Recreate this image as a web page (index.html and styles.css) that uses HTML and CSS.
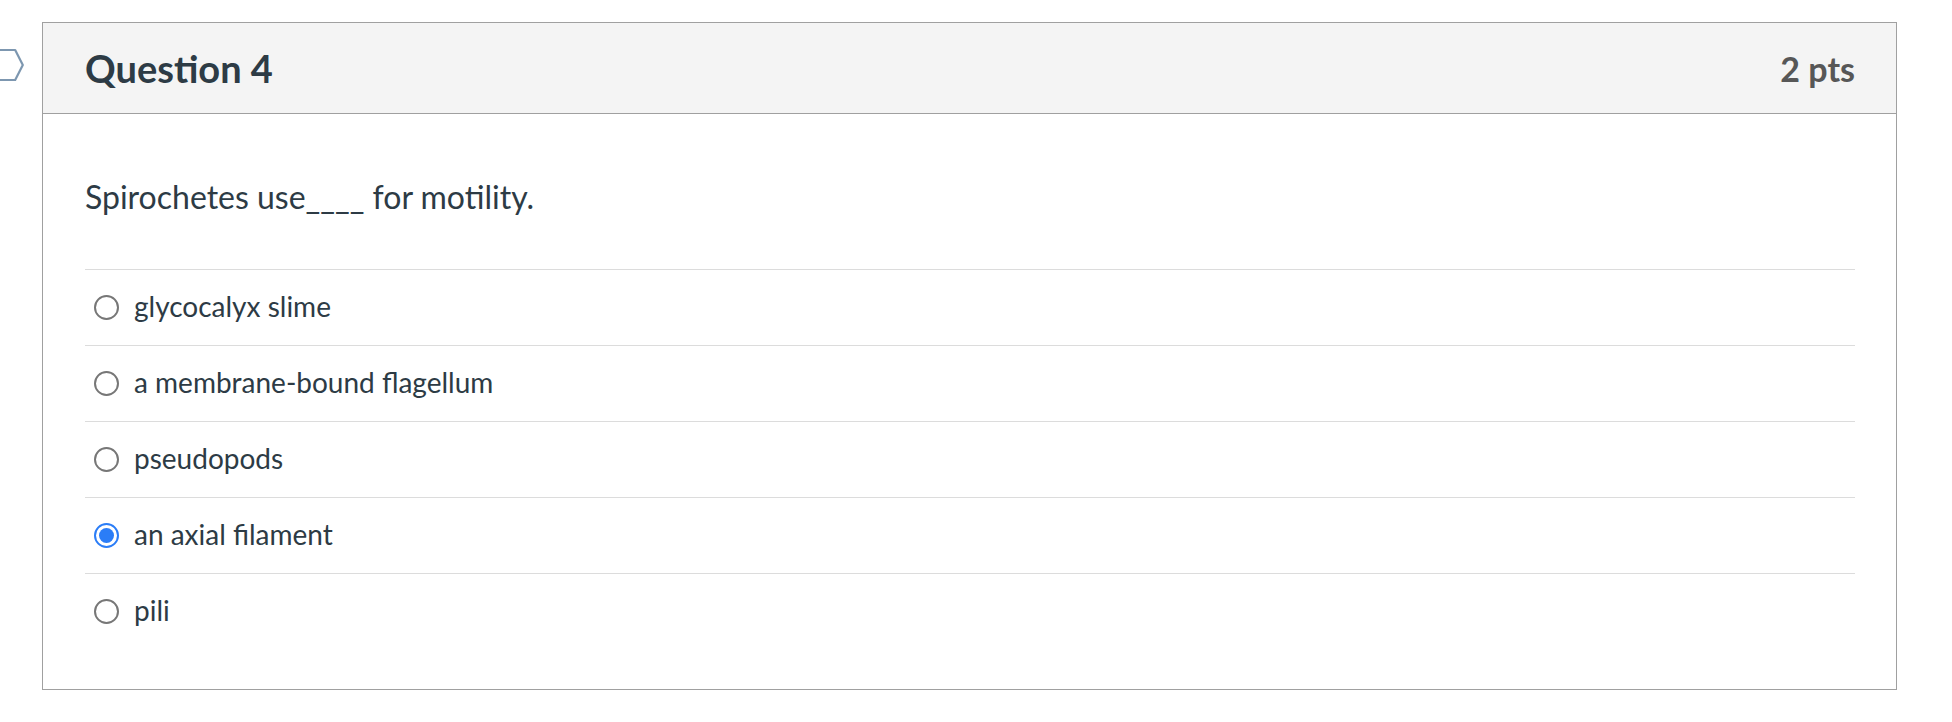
FILE: index.html
```html
<!DOCTYPE html>
<html>
<head>
<meta charset="utf-8">
<link rel="stylesheet" href="styles.css">
</head>
<body>
<div class="page">
  <div class="flag">
    <svg width="24" height="34" viewBox="0 0 24 34"><path d="M-4 2 H15.2 L22.8 17 L15.2 32 H-4" fill="none" stroke="#7d97b0" stroke-width="2.2" stroke-linejoin="round"/></svg>
  </div>
  <div class="question">
    <div class="header">
      <span class="title">Question 4</span>
      <span class="points">2 pts</span>
    </div>
    <div class="body">
      <div class="qtext">Spirochetes use____ for motility.</div>
      <div class="answers">
        <label class="answer"><span class="radio"></span><span class="label">glycocalyx slime</span></label>
        <label class="answer"><span class="radio"></span><span class="label">a membrane-bound flagellum</span></label>
        <label class="answer"><span class="radio"></span><span class="label">pseudopods</span></label>
        <label class="answer"><span class="radio checked"></span><span class="label">an axial filament</span></label>
        <label class="answer"><span class="radio"></span><span class="label">pili</span></label>
      </div>
    </div>
  </div>
</div>
</body>
</html>
```

FILE: styles.css
```css
html, body {
  margin: 0;
  padding: 0;
  background: #ffffff;
}

body {
  font-family: Lato, "Open Sans", "Liberation Sans", sans-serif;
  color: #2d3b45;
}

.page {
  display: flex;
  align-items: flex-start;
  padding: 22px 55px 0 0;
}

.flag {
  width: 42px;
  flex: 0 0 42px;
  padding-top: 26px;
}

.flag svg {
  display: block;
}

.question {
  flex: 1;
  border: 1px solid #a0a0a0;
  background: #fff;
}

.header {
  display: flex;
  align-items: center;
  justify-content: space-between;
  height: 90px;
  padding: 0 41px 0 42px;
  background: #f4f4f4;
  border-bottom: 1px solid #a0a0a0;
}

.title {
  font-size: 38px;
  font-weight: 700;
  color: #2d3b45;
}

.points {
  font-size: 34px;
  font-weight: 700;
  color: #575757;
}

.body {
  padding: 62px 41px 40px 42px;
}

.qtext {
  font-size: 32px;
  line-height: 42px;
  margin-bottom: 51px;
}

.answers {
  display: flex;
  flex-direction: column;
}

.answer {
  display: flex;
  align-items: center;
  height: 75px;
  box-sizing: border-box;
  height: 76px;
  padding-bottom: 4px;
  border-top: 1px solid #dcdcdc;
  font-size: 28px;
}

.radio {
  width: 21px;
  height: 21px;
  border: 2px solid #777777;
  border-radius: 50%;
  margin: 4px 15px 0 9px;
  box-sizing: content-box;
  display: flex;
  align-items: center;
  justify-content: center;
}

.radio.checked {
  border-color: #2b7df7;
}

.radio.checked::after {
  content: "";
  width: 15px;
  height: 15px;
  border-radius: 50%;
  background: #2b7df7;
}
```
